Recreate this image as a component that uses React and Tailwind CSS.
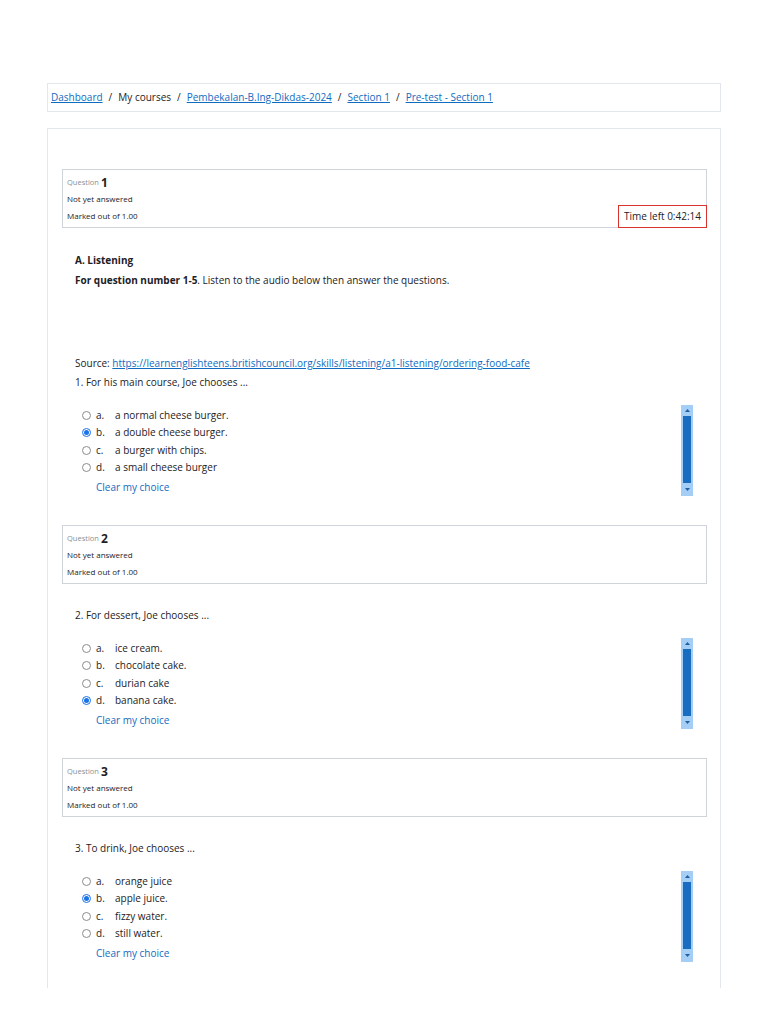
const font = { fontFamily: '"Open Sans", "Noto Sans", sans-serif' };

const Radio = ({ checked }) =>
  checked ? (
    <span className="flex items-center justify-center w-[9px] h-[9px] rounded-full border border-[#1a73e8] bg-white shrink-0">
      <span className="w-[5px] h-[5px] rounded-full bg-[#1a73e8]" />
    </span>
  ) : (
    <span className="w-[9px] h-[9px] rounded-full border border-[#8c8c8c] bg-white shrink-0" />
  );

const Scrollbar = () => (
  <div className="w-[12px] h-[91px] bg-[#a4cef6] flex flex-col items-center shrink-0">
    <div className="h-[11px] flex items-center justify-center">
      <svg width="5" height="3" viewBox="0 0 5 3">
        <path d="M0 3 L2.5 0 L5 3 Z" fill="#1a5fa8" />
      </svg>
    </div>
    <div className="w-[8px] flex-1 bg-[#1a6cc0]" />
    <div className="h-[13px] flex items-center justify-center">
      <svg width="5" height="3" viewBox="0 0 5 3">
        <path d="M0 0 L2.5 3 L5 0 Z" fill="#1a5fa8" />
      </svg>
    </div>
  </div>
);

const QuestionInfo = ({ num, timer }) => (
  <div className="relative border border-[#cfd4da] h-[59px] pl-[4px] pt-[4px] text-[8px] text-[#1d2125]">
    <div className="h-[17px] flex items-center">
      <span className="text-[#8a8f94] text-[7.5px]">Question</span>
      <span className="ml-[2px] font-bold text-[12px]">{num}</span>
    </div>
    <div className="h-[16px] flex items-center">Not yet answered</div>
    <div className="h-[17px] flex items-center">Marked out of 1.00</div>
    {timer && (
      <div className="absolute right-[-1px] bottom-[-1px] w-[89px] h-[23px] border border-[#d9342b] bg-white flex items-center justify-center text-[10px]">
        Time left 0:42:14
      </div>
    )}
  </div>
);

const Options = ({ options, selected }) => (
  <div className="flex justify-between">
    <div className="pt-[1.5px]">
      {options.map((opt, i) => (
        <div key={i} className="h-[17.5px] flex items-center pl-[7px] text-[10px]">
          <Radio checked={i === selected} />
          <span className="ml-[5px] w-[19px]">{"abcd"[i]}.</span>
          <span>{opt}</span>
        </div>
      ))}
      <div className="mt-[2.5px] h-[16px] flex items-center pl-[21px] text-[10px] text-[#0f6cbf]">
        Clear my choice
      </div>
    </div>
    <Scrollbar />
  </div>
);

const questions = [
  {
    num: 2,
    text: "2. For dessert, Joe chooses ...",
    options: ["ice cream.", "chocolate cake.", "durian cake", "banana cake."],
    selected: 3,
  },
  {
    num: 3,
    text: "3. To drink, Joe chooses ...",
    options: ["orange juice", "apple juice.", "fizzy water.", "still water."],
    selected: 1,
  },
];

export default function App() {
  return (
    <div className="w-[768px] h-[1024px] overflow-hidden bg-white pt-[83px] pl-[47px] text-[#1d2125]" style={font}>
      <div className="w-[674px] h-[29px] border border-[#e3e6ea] flex items-center pl-[3px] text-[10px]">
        <a className="text-[#0f6cbf] underline">Dashboard</a>
        <span className="mx-[6px]">/</span>
        <span>My courses</span>
        <span className="mx-[6px]">/</span>
        <a className="text-[#0f6cbf] underline">Pembekalan-B.Ing-Dikdas-2024</a>
        <span className="mx-[6px]">/</span>
        <a className="text-[#0f6cbf] underline">Section 1</a>
        <span className="mx-[6px]">/</span>
        <a className="text-[#0f6cbf] underline">Pre-test - Section 1</a>
      </div>

      <div className="mt-[16px] w-[674px] h-[860px] border-x border-t border-[#e3e6ea] pl-[14px] pr-[13px] pt-[40px]">
        <QuestionInfo num={1} timer />
        <div className="pl-[13px] pr-[14px]">
          <div className="mt-[24px] h-[16px] flex items-center text-[10px] font-bold">A. Listening</div>
          <div className="mt-[4px] h-[16px] flex items-center text-[10px]">
            <span className="font-bold">For question number 1-5</span>. Listen to the audio below then answer the questions.
          </div>
          <div className="mt-[67px] h-[16px] flex items-center text-[10px]">
            Source:&nbsp;
            <a className="text-[#0f6cbf] underline">
              https://learnenglishteens.britishcouncil.org/skills/listening/a1-listening/ordering-food-cafe
            </a>
          </div>
          <div className="mt-[3px] h-[16px] flex items-center text-[10px]">1. For his main course, Joe chooses ...</div>
          <div className="mt-[15px]">
            <Options
              options={["a normal cheese burger.", "a double cheese burger.", "a burger with chips.", "a small cheese burger"]}
              selected={1}
            />
          </div>
        </div>

        {questions.map((q) => (
          <div key={q.num} className="mt-[29px]">
            <QuestionInfo num={q.num} />
            <div className="pl-[13px] pr-[14px]">
              <div className="mt-[23px] h-[16px] flex items-center text-[10px]">{q.text}</div>
              <div className="mt-[15px]">
                <Options options={q.options} selected={q.selected} />
              </div>
            </div>
          </div>
        ))}
      </div>
    </div>
  );
}
